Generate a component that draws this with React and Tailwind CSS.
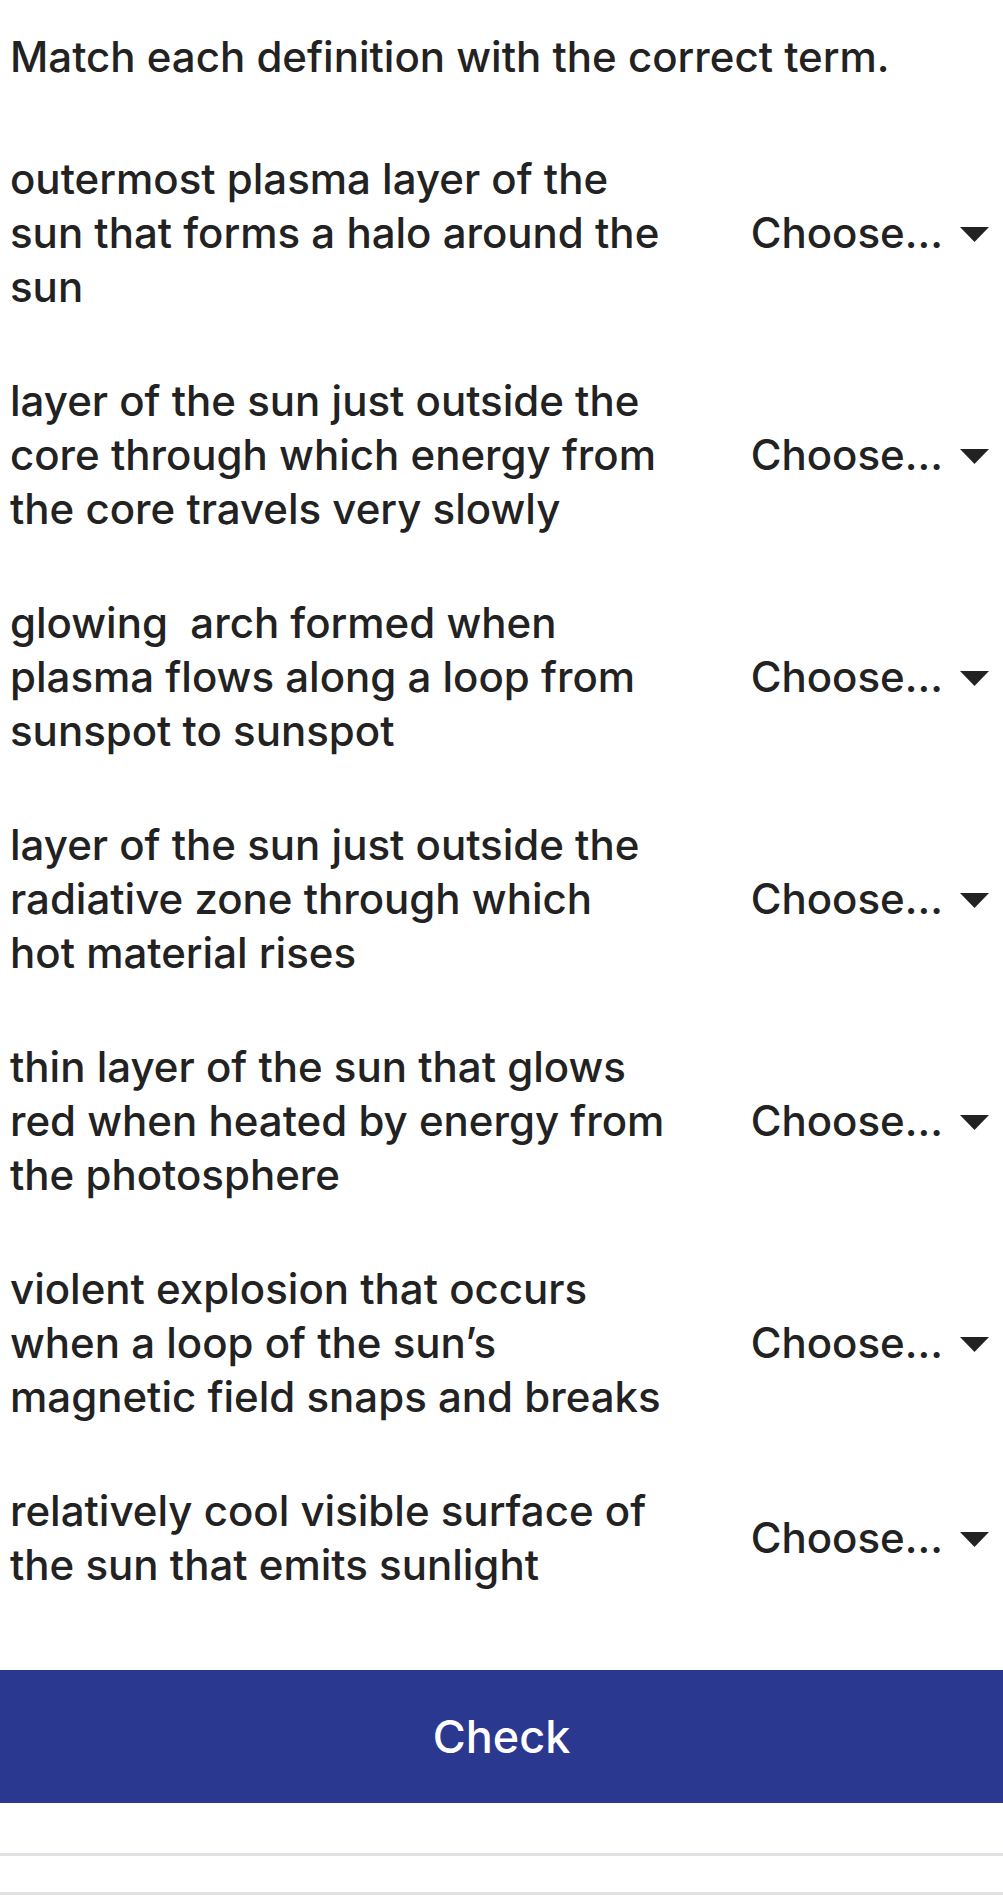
import React, { useState } from "react";

// definitions, broken the way the reference wraps them
const ITEMS = [
  ["outermost plasma layer of the", "sun that forms a halo around the", "sun"],
  ["layer of the sun just outside the", "core through which energy from", "the core travels very slowly"],
  ["glowing  arch formed when", "plasma flows along a loop from", "sunspot to sunspot"],
  ["layer of the sun just outside the", "radiative zone through which", "hot material rises"],
  ["thin layer of the sun that glows", "red when heated by energy from", "the photosphere"],
  ["violent explosion that occurs", "when a loop of the sun\u2019s", "magnetic field snaps and breaks"],
  ["relatively cool visible surface of", "the sun that emits sunlight"],
];

const ChooseSelect = () => (
  <div className="ml-auto flex items-center gap-[17px] pr-[4px] cursor-pointer">
    <span>Choose...</span>
    <svg width="29" height="15" viewBox="0 0 29 15" className="mt-[2px]">
      <polygon points="0,0 29,0 14.5,15" fill="#222222" />
    </svg>
  </div>
);

const App = () => {
  const [checked, setChecked] = useState(false);

  return (
    <div
      className="min-h-screen bg-white text-[#222222] text-[42px] leading-[54px] font-medium"
      style={{ fontFamily: "Inter, 'Noto Sans', sans-serif" }}
    >
      <div className="px-[10px] pt-[30px]">
        <p>Match each definition with the correct term.</p>

        {/* definitions */}
        <div className="mt-[68px] flex flex-col gap-[60px]">
          {ITEMS.map((lines, i) => (
            <div key={i} className="flex items-center">
              <p className="w-[690px] whitespace-pre">
                {lines.map((l, j) => (
                  <span key={j} className="block">
                    {l}
                  </span>
                ))}
              </p>
              <ChooseSelect />
            </div>
          ))}
        </div>
      </div>

      <button
        onClick={() => setChecked(!checked)}
        className="mt-[78px] w-full h-[133px] bg-[#2b388f] text-white text-[45px] font-medium"
      >
        Check
      </button>

      <div className="mt-[50px] h-[3px] bg-[#dfe1e5]" />
      <div className="mt-[36px] h-[3px] bg-[#dfe1e5]" />
    </div>
  );
};

export default App;
